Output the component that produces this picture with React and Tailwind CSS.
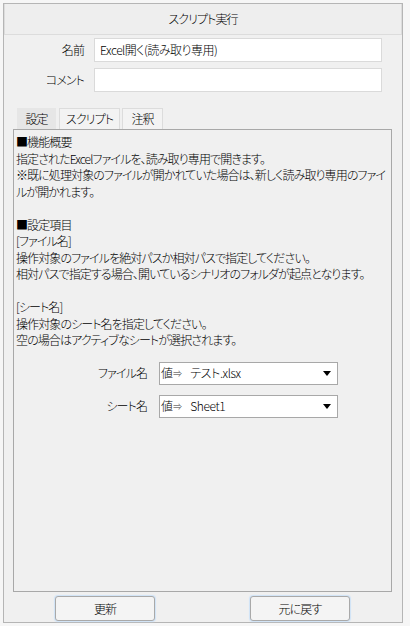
import React from "react";

const font = "font-['Noto_Sans_CJK_JP','Noto_Sans',sans-serif] [font-feature-settings:'palt'] font-light";

function Combo({ value }) {
  return (
    <div className="flex items-center w-[179px] h-[23px] border border-[#a8a8a8] bg-white">
      <span className="pl-[1px] leading-none">値</span>
      <span className="text-[9px] leading-none ml-[1px] text-[#333]">⇒</span>
      <span className="ml-[9px] leading-none tracking-[-0.4px]">{value}</span>
      <span className="ml-auto mr-[6px] w-0 h-0 border-l-[4px] border-r-[4px] border-t-[5px] border-l-transparent border-r-transparent border-t-black" />
    </div>
  );
}

export default function App() {
  const lines = [
    "■機能概要",
    "指定されたExcelファイルを、読み取り専用で開きます。",
    "※既に処理対象のファイルが開かれていた場合は、新しく読み取り専用のファイ",
    "ルが開かれます。",
    "",
    "■設定項目",
    "[ファイル名]",
    "操作対象のファイルを絶対パスか相対パスで指定してください。",
    "相対パスで指定する場合、開いているシナリオのフォルダが起点となります。",
    "",
    "[シート名]",
    "操作対象のシート名を指定してください。",
    "空の場合はアクティブなシートが選択されます。",
  ];
  return (
    <div className={`w-[410px] h-[626px] bg-[#f6f6f6] pt-[3px] pl-[3px] text-[12px] text-black tracking-[-0.9px] ${font}`}>
      <div className="w-[400px] h-[620px] border border-[#b5b5b5] bg-[#f0f0f0] flex flex-col">
        <div className="h-[31px] border-b border-r border-l border-[#dcdcdc] bg-[#eeeeee] flex items-center justify-center">
          スクリプト実行
        </div>
        <div className="mt-[3px] flex items-center h-[24px]">
          <div className="w-[80px] text-right">名前</div>
          <div className="ml-[10px] w-[288px] h-[24px] border border-[#dadada] bg-white flex items-center pl-[5px] tracking-[-0.5px]">
            Excel開く(読み取り専用)
          </div>
        </div>
        <div className="mt-[6px] flex items-center h-[24px]">
          <div className="w-[80px] text-right">コメント</div>
          <div className="ml-[10px] w-[288px] h-[24px] border border-[#dadada] bg-white" />
        </div>
        <div className="mt-[16px] ml-[13px] flex items-end h-[21px]">
          <div className="w-[39px] h-[21px] bg-[#e6e6e6] flex items-center justify-center">設定</div>
          <div className="ml-[3px] w-[61px] h-[21px] border border-b-0 border-[#dcdcdc] bg-[#f3f3f3] flex items-center justify-center">スクリプト</div>
          <div className="ml-[2px] w-[41px] h-[21px] border border-b-0 border-[#dcdcdc] bg-[#f3f3f3] flex items-center justify-center">注釈</div>
        </div>
        <div className="ml-[9px] w-[379px] h-[463px] border border-[#a8a8a8] bg-[#f0f0f0] pl-[2px] pt-[4px]">
          <div className="leading-[16.5px] whitespace-nowrap">
            {lines.map((l, i) => (
              <div key={i} className="h-[16.5px]">{l}</div>
            ))}
          </div>
          <div className="mt-[13px] flex flex-col gap-[10px]">
            <div className="flex items-center">
              <div className="w-[131px] text-right">ファイル名</div>
              <div className="ml-[12px]"><Combo value="テスト.xlsx" /></div>
            </div>
            <div className="flex items-center">
              <div className="w-[131px] text-right">シート名</div>
              <div className="ml-[12px]"><Combo value="Sheet1" /></div>
            </div>
          </div>
        </div>
        <div className="mt-[4px] ml-[9px] w-[379px] px-[42px] flex justify-between">
          <button className="w-[100px] h-[25px] rounded-[3px] border border-[#a9a9a9] bg-[#f4f4f4] shadow-[0_0_1px_1px_#cfe3f7] flex items-center justify-center">更新</button>
          <button className="w-[100px] h-[25px] rounded-[3px] border border-[#a9a9a9] bg-[#f4f4f4] shadow-[0_0_1px_1px_#cfe3f7] flex items-center justify-center">元に戻す</button>
        </div>
      </div>
    </div>
  );
}
